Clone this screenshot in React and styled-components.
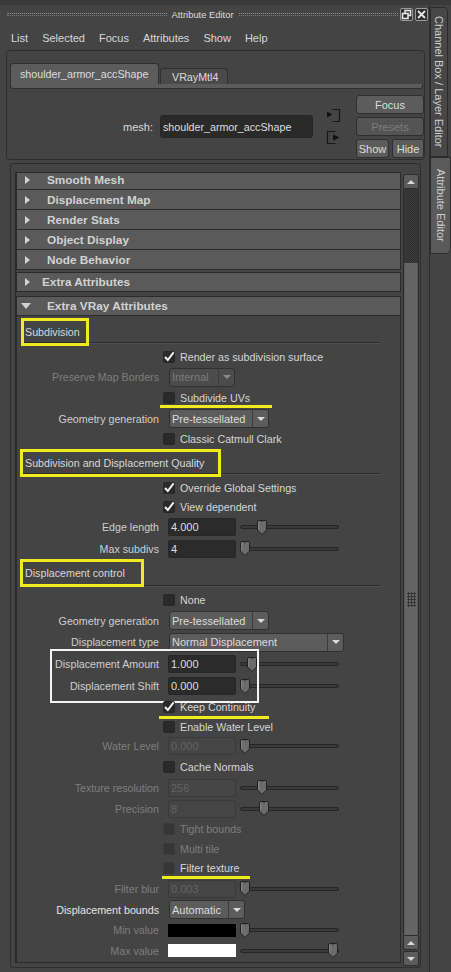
import styled, { createGlobalStyle } from "styled-components";

const GlobalStyle = createGlobalStyle`
  html, body {
    margin: 0;
    padding: 0;
    background: #444444;
    overflow: hidden;
  }
  body {
    font-family: "Liberation Sans", Arial, sans-serif;
    font-size: 10.7px;
    color: #d4d4d4;
  }
  * {
    box-sizing: border-box;
  }
`;

const YELLOW = "#f1ea1d";
const TRACK_RANGE = 89;

const collapsed = ["Smooth Mesh", "Displacement Map", "Render Stats", "Object Display", "Node Behavior"];

const sections = [
  {
    title: "Subdivision",
    head: { h: 26, top: 4, left: 4, padL: 1, padR: 6 },
    rows: [
      { type: "check", text: "Render as subdivision surface", checked: true, h: 20 },
      { type: "enum", label: "Preserve Map Borders", value: "Internal", w: 66, dim: true, h: 20 },
      { type: "check", text: "Subdivide UVs", h: 22, mark: { left: -3, width: 112, top: 13 } },
      { type: "enum", label: "Geometry generation", value: "Pre-tessellated", w: 100, h: 19 },
      { type: "check", text: "Classic Catmull Clark", h: 21 },
    ],
  },
  {
    title: "Subdivision and Displacement Quality",
    head: { h: 25, top: 3, left: 3, padL: 2, padR: 14 },
    rows: [
      { type: "check", text: "Override Global Settings", checked: true, h: 19 },
      { type: "check", text: "View dependent", checked: true, h: 20 },
      { type: "float", label: "Edge length", value: "4.000", knob: 0.19, h: 20 },
      { type: "float", label: "Max subdivs", value: "4", knob: 0, h: 23 },
    ],
  },
  {
    title: "Displacement control",
    head: { h: 26, top: 2, left: 3, padL: 2, padR: 16 },
    rows: [
      { type: "check", text: "None", h: 20 },
      { type: "enum", label: "Geometry generation", value: "Pre-tessellated", w: 100, h: 21 },
      { type: "enum", label: "Displacement type", value: "Normal Displacement", w: 175, h: 22 },
      {
        type: "boxed",
        rows: [
          { type: "float", label: "Displacement Amount", value: "1.000", knob: 0.08, h: 22 },
          { type: "float", label: "Displacement Shift", value: "0.000", knob: 0, h: 22 },
        ],
      },
      { type: "check", text: "Keep Continuity", checked: true, h: 20, mark: { left: -4, width: 110, top: 15 } },
      { type: "check", text: "Enable Water Level", h: 19 },
      { type: "float", label: "Water Level", value: "0.000", knob: 0, dim: true, h: 20 },
      { type: "check", text: "Cache Normals", h: 21 },
      { type: "float", label: "Texture resolution", value: "256", knob: 0.19, dim: true, h: 21 },
      { type: "float", label: "Precision", value: "8", knob: 0.21, dim: true, h: 21 },
      { type: "check", text: "Tight bounds", dim: true, dimBox: true, h: 20 },
      { type: "check", text: "Multi tile", dim: true, dimBox: true, h: 19 },
      { type: "check", text: "Filter texture", dimBox: true, h: 20, mark: { left: -1, width: 88, top: 14 } },
      { type: "float", label: "Filter blur", value: "0.003", knob: 0, dim: true, h: 21 },
      { type: "enum", label: "Displacement bounds", value: "Automatic", w: 76, bright: true, h: 21 },
      { type: "swatch", label: "Min value", color: "#000000", knob: 0, h: 20 },
      { type: "swatch", label: "Max value", color: "#ffffff", knob: 0.99, h: 21 },
    ],
  },
];

const App = () => {
  return (
    <Page>
      <GlobalStyle />
      <TopStrip />
      <Window>
        <Main>
          <TitleBar>
            <Grip />
            <TitleText>Attribute Editor</TitleText>
            <Grip />
            <WinButtons>
              <WinButton>
                <svg width="11" height="11" viewBox="0 0 11 11">
                  <rect x="4" y="1.5" width="5.5" height="5" fill="none" stroke="#e6e6e6" strokeWidth="1.6" />
                  <rect x="1.5" y="4.5" width="5.5" height="5" fill="#2e2e2e" stroke="#e6e6e6" strokeWidth="1.6" />
                </svg>
              </WinButton>
              <WinButton>
                <svg width="11" height="11" viewBox="0 0 11 11">
                  <path d="M2 2 L9 9 M9 2 L2 9" stroke="#e6e6e6" strokeWidth="1.8" />
                </svg>
              </WinButton>
            </WinButtons>
          </TitleBar>

          <MenuBar>
            <span>List</span>
            <span>Selected</span>
            <span>Focus</span>
            <span>Attributes</span>
            <span>Show</span>
            <span>Help</span>
          </MenuBar>

          <TabFrame>
            <TabRow>
              <Tab $active>shoulder_armor_accShape</Tab>
              <Tab>VRayMtl4</Tab>
            </TabRow>
            <TabBase />
            <NodeRow>
              <NodeLabel>mesh:</NodeLabel>
              <NodeField>shoulder_armor_accShape</NodeField>
              <NodeIcons>
                <svg width="15" height="13" viewBox="0 0 15 13">
                  <path d="M6.5 0.5 H13.5 V12.5 H6.5" fill="none" stroke="#161616" strokeWidth="1.2" />
                  <path d="M1 2.5 L6.5 5.5 L1 8.5 Z" fill="#111" />
                </svg>
                <svg width="15" height="13" viewBox="0 0 15 13">
                  <path d="M9.5 0.5 H1.5 V12.5 H9.5" fill="none" stroke="#161616" strokeWidth="1.2" />
                  <path d="M7 3.5 L13.5 6.5 L7 9.5 Z" fill="#111" />
                </svg>
              </NodeIcons>
              <ButtonCol>
                <ToolButton>Focus</ToolButton>
                <ToolButton $disabled>Presets</ToolButton>
                <ButtonPair>
                  <ToolButton $w={33}>Show</ToolButton>
                  <ToolButton $w={32}>Hide</ToolButton>
                </ButtonPair>
              </ButtonCol>
            </NodeRow>
          </TabFrame>

          <ScrollFrame>
            <Viewport>
              <List $offset={-3}>
                {collapsed.map((name) => (
                  <FrameHeader key={name}>
                    <Twisty $w={30} />
                    {name}
                  </FrameHeader>
                ))}
                <FrameHeader $top $gap={2}>
                  <Twisty $w={25} />
                  Extra Attributes
                </FrameHeader>
                <FrameHeader $top $gap={4}>
                  <Twisty $w={30} $open />
                  Extra VRay Attributes
                </FrameHeader>
                <GroupBody>
                  {sections.map((s) => (
                    <Section key={s.title}>
                      <SectionHead $h={s.head.h}>
                        <SectionTitle
                          $top={s.head.top}
                          $left={s.head.left}
                          $padL={s.head.padL}
                          $padR={s.head.padR}
                        >
                          {s.title}
                        </SectionTitle>
                      </SectionHead>
                      {s.rows.map((r, i) => renderRow(r, i))}
                    </Section>
                  ))}
                </GroupBody>
              </List>
            </Viewport>

            <ScrollBar>
              <ScrollButton>
                <ScrollArrow />
              </ScrollButton>
              <Trough>
                <Thumb $offset={74}>
                  <ThumbGrip />
                </Thumb>
              </Trough>
              <ScrollButton>
                <ScrollArrow />
              </ScrollButton>
              <ScrollButton $gap={1}>
                <ScrollArrow $down />
              </ScrollButton>
            </ScrollBar>
          </ScrollFrame>
        </Main>

        <Dock>
          <DockTab $h={150}>Channel Box / Layer Editor</DockTab>
          <DockTab $h={97} $active>
            Attribute Editor
          </DockTab>
        </Dock>
      </Window>
    </Page>
  );
};

const Knob = ({ value }) => (
  <KnobWrap style={{ left: Math.round(value * TRACK_RANGE) }}>
    <svg width="10" height="15" viewBox="0 0 10 15">
      <path
        d="M0.5 1.8 Q0.5 0.5 1.8 0.5 H8.2 Q9.5 0.5 9.5 1.8 V10 L5 14.5 L0.5 10 Z"
        fill="#6c6c6c"
        stroke="#202020"
      />
      <path d="M1.7 2 V9.6" stroke="#8c8c8c" />
      <path d="M4.2 1.6 H5.8" stroke="#3a3a3a" />
    </svg>
  </KnobWrap>
);

const renderRow = (r, i) => {
  if (r.type === "boxed") {
    return <Annotated key={i}>{r.rows.map((x, j) => renderRow(x, j))}</Annotated>;
  }
  if (r.type === "check") {
    return (
      <Row key={i} $h={r.h}>
        <Label />
        <CheckGroup>
          <Box $dim={r.dimBox}>
            {r.checked && (
              <CheckSvg width="12" height="12" viewBox="0 0 12 12">
                <path d="M2 6 L4.8 9 L10.6 1.4" fill="none" stroke="#f2f2f2" strokeWidth="2" />
              </CheckSvg>
            )}
          </Box>
          <CheckText $dim={r.dim}>{r.text}</CheckText>
          {r.mark && <Underline $left={r.mark.left} $width={r.mark.width} $top={r.mark.top} />}
        </CheckGroup>
      </Row>
    );
  }
  const tone = r.dim ? "dim" : r.bright ? "bright" : "normal";
  if (r.type === "enum") {
    return (
      <Row key={i} $h={r.h}>
        <Label $tone={tone}>{r.label}</Label>
        <Dropdown $w={r.w} $dim={r.dim}>
          <DropValue>{r.value}</DropValue>
          <DropArrow $dim={r.dim} />
        </Dropdown>
      </Row>
    );
  }
  if (r.type === "swatch") {
    return (
      <Row key={i} $h={r.h}>
        <Label $tone="dim">{r.label}</Label>
        <Swatch $color={r.color} />
        <Slider>
          <Track />
          <Knob value={r.knob} />
        </Slider>
      </Row>
    );
  }
  return (
    <Row key={i} $h={r.h}>
      <Label $tone={tone}>{r.label}</Label>
      <Field $dim={r.dim}>{r.value}</Field>
      <Slider>
        <Track />
        <Knob value={r.knob} />
      </Slider>
    </Row>
  );
};

export default App;

// Styled Components
const Page = styled.div`
  width: 451px;
  height: 972px;
  display: flex;
  flex-direction: column;
  background: #444444;
  overflow: hidden;
`;

const TopStrip = styled.div`
  height: 5px;
  flex-shrink: 0;
  background: #3a3a3a;
`;

const Window = styled.div`
  flex: 1;
  display: flex;
`;

const Main = styled.div`
  width: 429px;
  display: flex;
  flex-direction: column;
`;

const TitleBar = styled.div`
  height: 18px;
  flex-shrink: 0;
  display: flex;
  align-items: center;
  padding: 0 1px 0 7px;
`;

const Grip = styled.span`
  display: block;
  flex: 1 1 0;
  min-width: 0;
  height: 3px;
  border-top: 1px dotted #8a8a8a;
  border-bottom: 1px dotted #7a7a7a;
`;

const TitleText = styled.span`
  margin: 0 5px;
  font-size: 9.4px;
  color: #dedede;
  white-space: nowrap;
`;

const WinButtons = styled.div`
  display: flex;
  gap: 2px;
  margin-left: 2px;
`;

const WinButton = styled.span`
  width: 13px;
  height: 13px;
  display: flex;
  align-items: center;
  justify-content: center;
  background: #2e2e2e;
  border: 1px solid #9a9a9a;
  border-radius: 2px;
`;

const MenuBar = styled.div`
  height: 27px;
  padding: 3px 0 0 11px;
  display: flex;
  align-items: center;
  gap: 14px;
  font-size: 11px;
  color: #d8d8d8;
`;

const TabFrame = styled.div`
  height: 110px;
  margin: 0 4px 0 6px;
  padding: 12px 0 0 3px;
  border: 1px solid #2e2e2e;
  border-radius: 4px;
  display: flex;
  flex-direction: column;
`;

const TabRow = styled.div`
  height: 21px;
  display: flex;
  align-items: flex-end;
  gap: 1px;
`;

const Tab = styled.div`
  width: ${(p) => (p.$active ? 149 : 68)}px;
  height: ${(p) => (p.$active ? 21 : 16)}px;
  padding-left: ${(p) => (p.$active ? 9 : 11)}px;
  display: flex;
  align-items: center;
  background: ${(p) => (p.$active ? "#5c5c5c" : "#4a4a4a")};
  border: 1px solid #2f2f2f;
  border-bottom: none;
  border-radius: 3px 3px 0 0;
  color: #dcdcdc;
  white-space: nowrap;
`;

const TabBase = styled.div`
  width: 413px;
  height: 5px;
  background: #5c5c5c;
  border: 1px solid #2f2f2f;
  border-top: none;
  border-radius: 0 0 3px 3px;
`;

const NodeRow = styled.div`
  height: 63px;
  margin-top: 6px;
  display: flex;
  align-items: center;
  justify-content: flex-end;
`;

const NodeLabel = styled.span`
  margin-right: 7px;
  font-size: 11px;
  color: #dadada;
`;

const NodeField = styled.span`
  width: 153px;
  height: 23px;
  padding-left: 2px;
  display: flex;
  align-items: center;
  background: #2a2a2a;
  border: 1px solid #262626;
  border-radius: 3px;
  color: #dedede;
  white-space: nowrap;
`;

const NodeIcons = styled.div`
  width: 15px;
  margin: 0 15px 0 13px;
  display: flex;
  flex-direction: column;
  gap: 9px;

  svg {
    display: block;
  }
`;

const ButtonCol = styled.div`
  width: 68px;
  display: flex;
  flex-direction: column;
  gap: 3px;
`;

const ButtonPair = styled.div`
  display: flex;
  justify-content: space-between;
`;

const ToolButton = styled.span`
  width: ${(p) => (p.$w ? `${p.$w}px` : "100%")};
  height: 19px;
  display: flex;
  align-items: center;
  justify-content: center;
  background: ${(p) => (p.$disabled ? "#545454" : "#5c5c5c")};
  border: 1px solid #2e2e2e;
  border-radius: 3px;
  font-size: 11px;
  color: ${(p) => (p.$disabled ? "#7c7c7c" : "#dcdcdc")};
`;

const ScrollFrame = styled.div`
  height: 805px;
  margin: 3px 8px 0 10px;
  padding: 8px 1px 0 4px;
  border: 1px solid #2e2e2e;
  border-radius: 3px;
  display: flex;
  align-items: flex-start;
  gap: 2px;
`;

const Viewport = styled.div`
  width: 386px;
  height: 791px;
  border-top: 1px solid #2b2b2b;
  border-left: 1px solid #2b2b2b;
  overflow: hidden;
`;

const List = styled.div`
  margin-top: ${(p) => p.$offset}px;
  display: flex;
  flex-direction: column;
`;

const FrameHeader = styled.div`
  height: 20px;
  flex-shrink: 0;
  margin-top: ${(p) => p.$gap || 0}px;
  display: flex;
  align-items: center;
  background: #5a5a5a;
  border: 1px solid #2b2b2b;
  border-top-width: ${(p) => (p.$top ? 1 : 0)}px;
  font-size: 11.8px;
  font-weight: bold;
  color: #d2d2d2;
  white-space: nowrap;
`;

const Twisty = styled.span`
  width: ${(p) => p.$w}px;
  flex-shrink: 0;
  padding-left: ${(p) => (p.$open ? 4 : 8)}px;
  display: flex;
  align-items: center;

  &::before {
    content: "";
    width: 0;
    height: 0;
    border-style: solid;
    border-width: ${(p) => (p.$open ? "6px 5px 0 5px" : "4px 0 4px 5px")};
    border-color: ${(p) =>
      p.$open ? "#d2d2d2 transparent transparent transparent" : "transparent transparent transparent #d2d2d2"};
  }
`;

const GroupBody = styled.div`
  padding: 1px 0;
  border: 1px solid #2b2b2b;
  border-top: none;
  display: flex;
  flex-direction: column;
`;

const Section = styled.div`
  display: flex;
  flex-direction: column;
`;

const SectionHead = styled.div`
  width: 360px;
  height: ${(p) => p.$h}px;
  flex-shrink: 0;
  margin: 0 0 4px 3px;
  display: flex;
  align-items: flex-start;
  border-bottom: 1px solid #2c2c2c;
  box-shadow: 0 1px 0 #525252;
`;

const SectionTitle = styled.span`
  height: 22px;
  margin-top: ${(p) => p.$top}px;
  margin-left: ${(p) => p.$left}px;
  padding: 0 ${(p) => p.$padR}px 0 ${(p) => p.$padL}px;
  display: flex;
  align-items: center;
  outline: 3px solid ${YELLOW};
  color: #d8d8d8;
  white-space: nowrap;
`;

const Row = styled.div`
  height: ${(p) => p.$h}px;
  flex-shrink: 0;
  display: flex;
  align-items: center;
`;

const Label = styled.span`
  width: 142px;
  flex-shrink: 0;
  text-align: right;
  white-space: nowrap;
  color: ${(p) => (p.$tone === "dim" ? "#7e7e7e" : p.$tone === "bright" ? "#e4e4e4" : "#cecece")};
`;

const CheckGroup = styled.span`
  position: relative;
  height: 12px;
  margin-left: 4px;
  display: inline-flex;
  align-items: center;
  gap: 5px;
`;

const Box = styled.span`
  width: 12px;
  height: 12px;
  display: flex;
  align-items: center;
  justify-content: center;
  background: ${(p) => (p.$dim ? "#363636" : "#2a2a2a")};
  border: 1px solid ${(p) => (p.$dim ? "#3b3b3b" : "#272727")};
  border-radius: 2px;
`;

const CheckSvg = styled.svg`
  flex-shrink: 0;
  overflow: visible;
`;

const CheckText = styled.span`
  line-height: 12px;
  white-space: nowrap;
  color: ${(p) => (p.$dim ? "#7e7e7e" : "#d6d6d6")};
`;

const Underline = styled.span`
  position: absolute;
  left: ${(p) => p.$left}px;
  top: ${(p) => p.$top}px;
  width: ${(p) => p.$width}px;
  height: 3px;
  background: ${YELLOW};
`;

const Field = styled.span`
  width: 68px;
  height: 18px;
  margin-left: 9px;
  padding-left: 2px;
  display: flex;
  align-items: center;
  background: ${(p) => (p.$dim ? "#454545" : "#2b2b2b")};
  border: 1px solid ${(p) => (p.$dim ? "#3a3a3a" : "#272727")};
  border-radius: 2px;
  font-size: 11px;
  color: ${(p) => (p.$dim ? "#646464" : "#dedede")};
`;

const Swatch = styled.span`
  width: 68px;
  height: 13px;
  margin-left: 9px;
  background: ${(p) => p.$color};
`;

const Slider = styled.span`
  position: relative;
  width: 99px;
  height: 15px;
  margin-left: 4px;
  display: flex;
  align-items: center;
`;

const Track = styled.span`
  flex: 1;
  height: 4px;
  background: #3a3a3a;
  border: 1px solid #262626;
  border-radius: 2px;
`;

const KnobWrap = styled.span`
  position: absolute;
  top: 0;
  width: 10px;
  height: 15px;

  svg {
    display: block;
  }
`;

const Dropdown = styled.span`
  width: ${(p) => p.$w}px;
  height: 19px;
  margin-left: 10px;
  display: flex;
  background: ${(p) => (p.$dim ? "#4c4c4c" : "#5c5c5c")};
  border: 1px solid #303030;
  border-radius: 3px;
  color: ${(p) => (p.$dim ? "#7a7a7a" : "#dcdcdc")};
`;

const DropValue = styled.span`
  flex: 1;
  padding-left: 2px;
  display: flex;
  align-items: center;
  font-size: 11px;
  white-space: nowrap;
`;

const DropArrow = styled.span`
  width: 16px;
  display: flex;
  align-items: center;
  justify-content: center;
  border-left: 1px solid #3c3c3c;

  &::before {
    content: "";
    border-style: solid;
    border-width: 4px 4px 0 4px;
    border-color: ${(p) => (p.$dim ? "#8a8a8a" : "#dadada")} transparent transparent transparent;
  }
`;

const Annotated = styled.div`
  position: relative;
  display: flex;
  flex-direction: column;

  &::after {
    content: "";
    position: absolute;
    left: 33px;
    top: -4px;
    width: 205px;
    height: 50px;
    border: 2px solid #f4f4f4;
    pointer-events: none;
  }
`;

const ScrollBar = styled.div`
  width: 16px;
  height: 792px;
  margin-top: 2px;
  display: flex;
  flex-direction: column;
`;

const ScrollButton = styled.div`
  height: 15px;
  flex-shrink: 0;
  margin-top: ${(p) => p.$gap || 0}px;
  display: flex;
  align-items: center;
  justify-content: center;
  background: #5c5c5c;
  border: 1px solid #2c2c2c;
  border-radius: 2px;
`;

const ScrollArrow = styled.span`
  width: 0;
  height: 0;
  border-left: 4px solid transparent;
  border-right: 4px solid transparent;
  ${(p) => (p.$down ? "border-top: 4px solid #d8d8d8;" : "border-bottom: 4px solid #d8d8d8;")}
`;

const Trough = styled.div`
  flex: 1;
  display: flex;
  flex-direction: column;
  background: repeating-conic-gradient(#2e2e2e 0 25%, #3d3d3d 0 50%) 0 0 / 2px 2px;
  border-left: 1px solid #2c2c2c;
  border-right: 1px solid #2c2c2c;
`;

const Thumb = styled.div`
  flex: 1;
  margin-top: ${(p) => p.$offset}px;
  display: flex;
  align-items: center;
  justify-content: center;
  background: #656565;
  border-left: 1px solid #575757;
  border-right: 1px solid #575757;
`;

const ThumbGrip = styled.div`
  width: 9px;
  height: 15px;
  background: radial-gradient(circle, #2e2e2e 45%, transparent 55%) 0 0 / 3px 3px;
`;

const Dock = styled.div`
  width: 22px;
  padding-top: 2px;
  border-left: 1px solid #2d2d2d;
  display: flex;
  flex-direction: column;
`;

const DockTab = styled.div`
  width: ${(p) => (p.$active ? 21 : 18)}px;
  height: ${(p) => p.$h}px;
  flex-shrink: 0;
  writing-mode: vertical-rl;
  display: flex;
  align-items: center;
  justify-content: center;
  background: ${(p) => (p.$active ? "#5a5a5a" : "#474747")};
  border: 1px solid #2b2b2b;
  border-radius: ${(p) => (p.$active ? "0 0 5px 0" : "0 4px 0 0")};
  font-size: 11px;
  color: #cfcfcf;
  white-space: nowrap;
`;
